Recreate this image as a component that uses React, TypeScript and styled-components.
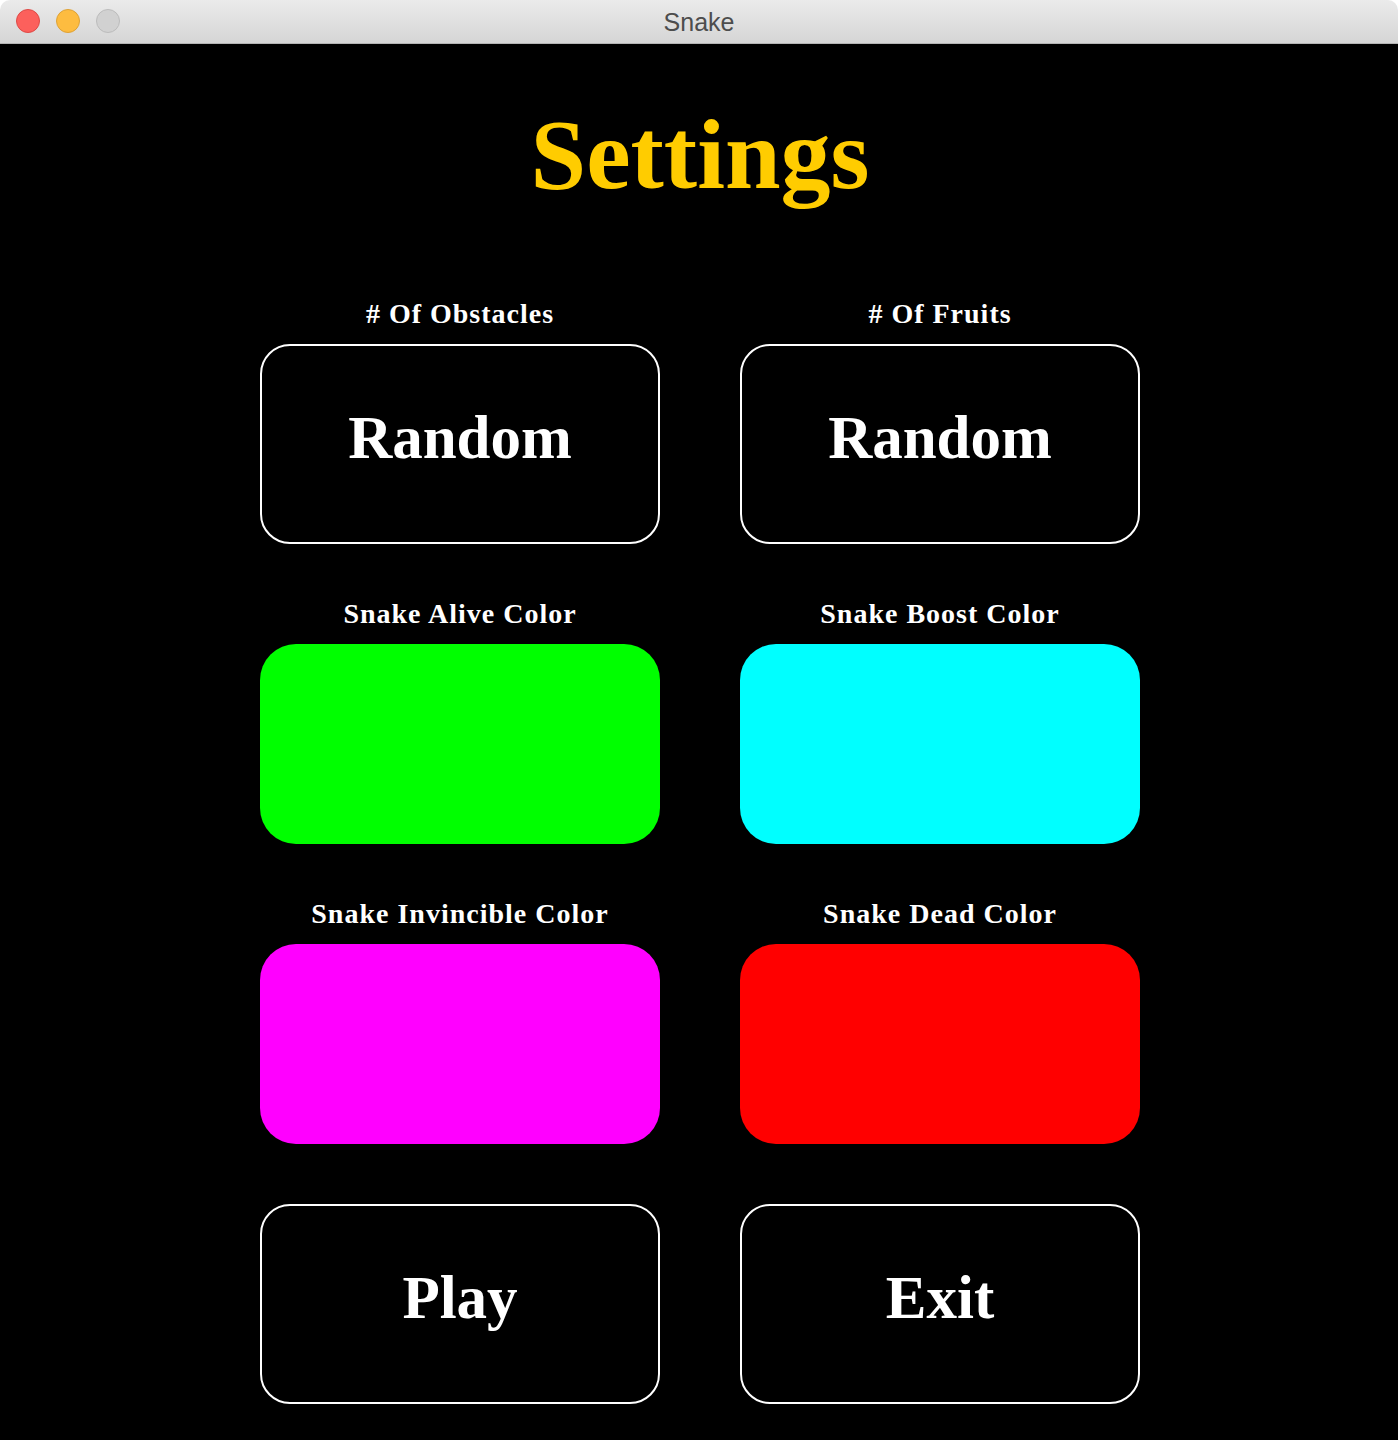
import styled, { createGlobalStyle } from 'styled-components';

const GlobalStyle = createGlobalStyle`
    html, body {
        margin: 0;
        padding: 0;
        background: #ffffff;
    }

    * {
        box-sizing: border-box;
    }
`;

type Setting = {
    label: string;
    value?: string;
    color?: string;
};

const settings: Setting[] = [
    {label: '# Of Obstacles', value: 'Random'},
    {label: '# Of Fruits', value: 'Random'},
    {label: 'Snake Alive Color', color: '#00ff00'},
    {label: 'Snake Boost Color', color: '#00ffff'},
    {label: 'Snake Invincible Color', color: '#ff00ff'},
    {label: 'Snake Dead Color', color: '#ff0000'},
];

export default function App() {
    return (
        <>
            <GlobalStyle/>
            <Window>
                <TitleBar>
                    <Lights>
                        <Light $fill="#fc605c" $edge="#de4a46"/>
                        <Light $fill="#fdbc40" $edge="#dea236"/>
                        <Light $fill="#d1d1d1" $edge="#bcbcbc"/>
                    </Lights>
                    <WindowTitle>Snake</WindowTitle>
                </TitleBar>
                <Content>
                    <Heading>Settings</Heading>
                    <SettingsGrid>
                        {settings.map((s) => (
                            <Cell key={s.label}>
                                <Label>{s.label}</Label>
                                {s.color
                                    ? <Swatch $color={s.color}/>
                                    : <OutlineButton>{s.value}</OutlineButton>}
                            </Cell>
                        ))}
                    </SettingsGrid>
                    <Actions>
                        <OutlineButton>Play</OutlineButton>
                        <OutlineButton>Exit</OutlineButton>
                    </Actions>
                </Content>
            </Window>
        </>
    );
}

const Window = styled.div`
    width: 1398px;
    min-height: 1440px;
    display: flex;
    flex-direction: column;
`;

const TitleBar = styled.div`
    position: relative;
    height: 44px;
    flex-shrink: 0;
    display: flex;
    align-items: center;
    justify-content: center;
    border-radius: 10px 10px 0 0;
    background: linear-gradient(#ebebeb, #d5d5d5);
    border-bottom: 1px solid #b4b4b4;
`;

const Lights = styled.div`
    position: absolute;
    left: 16px;
    top: 9px;
    display: flex;
    gap: 16px;
`;

const Light = styled.span<{ $fill: string; $edge: string }>`
    width: 24px;
    height: 24px;
    border-radius: 50%;
    background: ${(p) => p.$fill};
    border: 1px solid ${(p) => p.$edge};
`;

const WindowTitle = styled.span`
    font-family: "Liberation Sans", Arial, sans-serif;
    font-size: 25px;
    color: #4d4d4d;
    line-height: 1;
    margin-top: 1px;
`;

const Content = styled.main`
    flex: 1;
    padding-left: 2px;
    background: #000000;
    display: flex;
    flex-direction: column;
    align-items: center;
    font-family: "Liberation Serif", "Times New Roman", serif;
    color: #ffffff;
`;

const Heading = styled.h1`
    margin: 61px 0 0;
    font-size: 100px;
    line-height: 100px;
    font-weight: 700;
    color: #ffcc00;
`;

const SettingsGrid = styled.div`
    margin-top: 94px;
    display: grid;
    grid-template-columns: 400px 400px;
    column-gap: 80px;
    row-gap: 55px;
`;

const Cell = styled.div`
    display: flex;
    flex-direction: column;
    align-items: center;
    gap: 15px;
`;

const Label = styled.div`
    height: 30px;
    font-size: 28px;
    line-height: 30px;
    font-weight: 700;
    letter-spacing: 1px;
    white-space: nowrap;
`;

const OutlineButton = styled.div`
    width: 400px;
    height: 200px;
    display: flex;
    align-items: center;
    justify-content: center;
    padding-bottom: 13px;
    border: 2px solid #ffffff;
    border-radius: 30px;
    font-size: 61px;
    font-weight: 700;
    line-height: 1;
`;

const Swatch = styled.div<{ $color: string }>`
    width: 400px;
    height: 200px;
    border-radius: 36px;
    background: ${(p) => p.$color};
`;

const Actions = styled.div`
    margin-top: 60px;
    display: grid;
    grid-template-columns: 400px 400px;
    column-gap: 80px;
`;
